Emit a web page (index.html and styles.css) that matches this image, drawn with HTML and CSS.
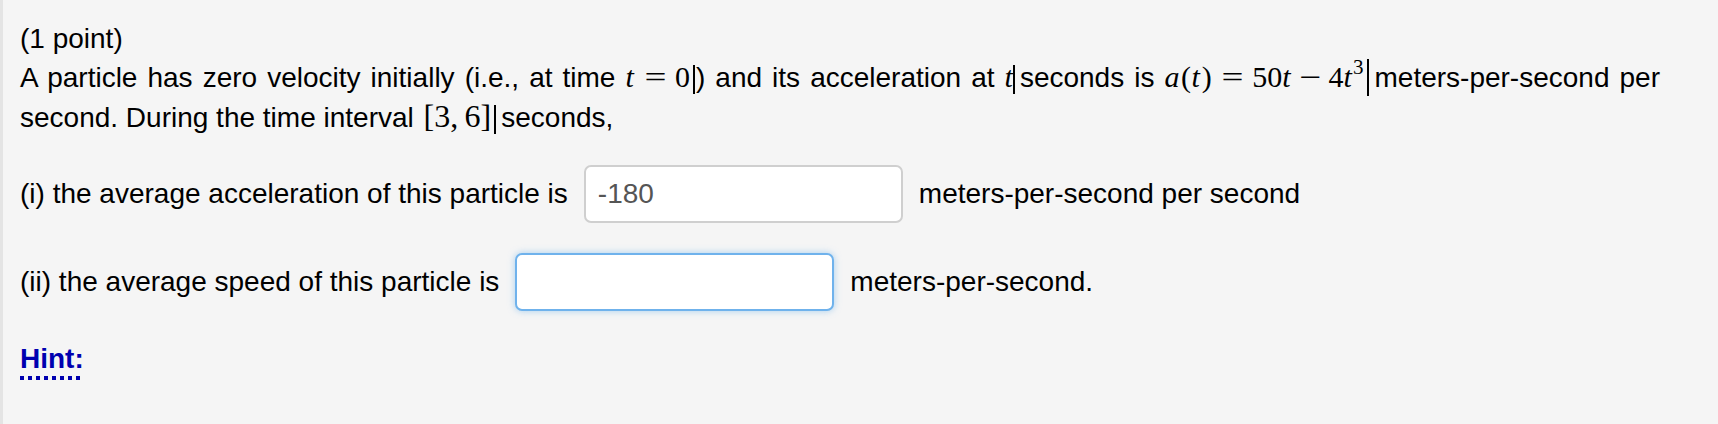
FILE: index.html
```html
<!DOCTYPE html>
<html lang="en">
<head>
<meta charset="utf-8">
<title>Problem</title>
<link rel="stylesheet" href="styles.css">
</head>
<body>
<div class="problem">
  <p class="statement">(1 point)<br>A particle has zero velocity initially (i.e., at time <span class="m"><i class="v-t">t</i><span class="rel"><span class="op">=</span></span>0</span><span class="bar gap"></span>) and its acceleration at <span class="m"><i>t</i></span><span class="bar after"></span>seconds is <span class="m"><i class="v-a">a</i><span class="par">(</span><i class="v-t">t</i><span class="par">)</span><span class="rel"><span class="op">=</span></span>50<i class="v-t">t</i><span class="bin"><span class="op">&minus;</span></span>4<i class="v-t">t</i><sup>3</sup></span><span class="bar tall after"></span>meters-per-second per second. During the time interval <span class="m interval">[3,<span class="thin"></span>6]</span><span class="bar gap after"></span>seconds,</p>

  <div class="row">
    <span class="label">(i) the average acceleration of this particle is</span>
    <input class="answer" type="text" value="-180">
    <span class="label">meters-per-second per second</span>
  </div>

  <div class="row">
    <span class="label">(ii) the average speed of this particle is</span>
    <input class="answer focused" type="text" value="">
    <span class="label">meters-per-second.</span>
  </div>

  <p class="hint-line"><a class="hint" href="#">Hint:</a></p>
</div>
</body>
</html>
```

FILE: styles.css
```css
html, body {
  margin: 0;
  padding: 0;
}

body {
  background: #f5f5f5;
  font-family: "Liberation Sans", Arial, Helvetica, sans-serif;
  font-size: 28px;
  color: #000;
  width: 1718px;
  height: 424px;
  overflow: hidden;
}

.problem {
  border-left: 3px solid #e4e4e4;
  min-height: 424px;
  box-sizing: border-box;
  padding: 20px 58px 0 17px;
}

.statement {
  margin: 0;
  line-height: 38px;
  text-align: justify;
}

.m {
  font-family: "Liberation Serif", "Times New Roman", serif;
  font-size: 30px;
  line-height: 38px;
  white-space: nowrap;
}

.m.interval {
  font-size: 32px;
  margin-left: 2px;
}

.m i {
  font-style: italic;
}

.v-t {
  margin-right: 0.04em;
}

.v-a {
  margin-right: 0.03em;
}

.par {
  margin: 0 0.02em;
}

.m sup {
  font-size: 0.7em;
  line-height: 0;
  vertical-align: 0.6em;
}

.rel,
.bin {
  display: inline-block;
  width: 0.778em;
  text-align: center;
}

.op {
  display: inline-block;
  transform: scaleX(1.3);
}

.rel {
  margin: 0 0.278em;
}

.bin {
  margin: 0 0.222em;
}

.thin {
  display: inline-block;
  width: 0.2em;
}

.bar {
  display: inline-block;
  width: 2px;
  height: 29px;
  background: #000;
  vertical-align: -7px;
}

.bar.gap {
  margin-left: 3px;
  margin-right: 1px;
}

.bar.after {
  margin-right: 5px;
}

.bar.tall {
  height: 37px;
  margin-left: 4px;
  vertical-align: -9px;
}

.row {
  display: flex;
  align-items: center;
  gap: 16px;
  line-height: 38px;
}

.statement + .row {
  margin-top: 28px;
}

.row + .row {
  margin-top: 30px;
}

.answer {
  box-sizing: border-box;
  width: 319px;
  height: 58px;
  margin: 0;
  padding: 0 12px;
  border: 2px solid #cfcfcf;
  border-radius: 7px;
  background: #fff;
  font-family: "Liberation Sans", Arial, Helvetica, sans-serif;
  font-size: 28px;
  color: #555;
  outline: none;
}

.answer.focused {
  border-color: #6fb2ec;
  box-shadow: 0 0 7px rgba(102, 175, 233, 0.55);
}

.hint-line {
  margin: 29px 0 0;
  line-height: 38px;
}

.hint {
  display: inline-block;
  line-height: 30px;
  padding-bottom: 6px;
  font-weight: bold;
  color: #0000b0;
  text-decoration: none;
  background-image: linear-gradient(to right, #0000b0 50%, transparent 50%);
  background-size: 8px 4px;
  background-repeat: repeat-x;
  background-position: 0 100%;
}
```
